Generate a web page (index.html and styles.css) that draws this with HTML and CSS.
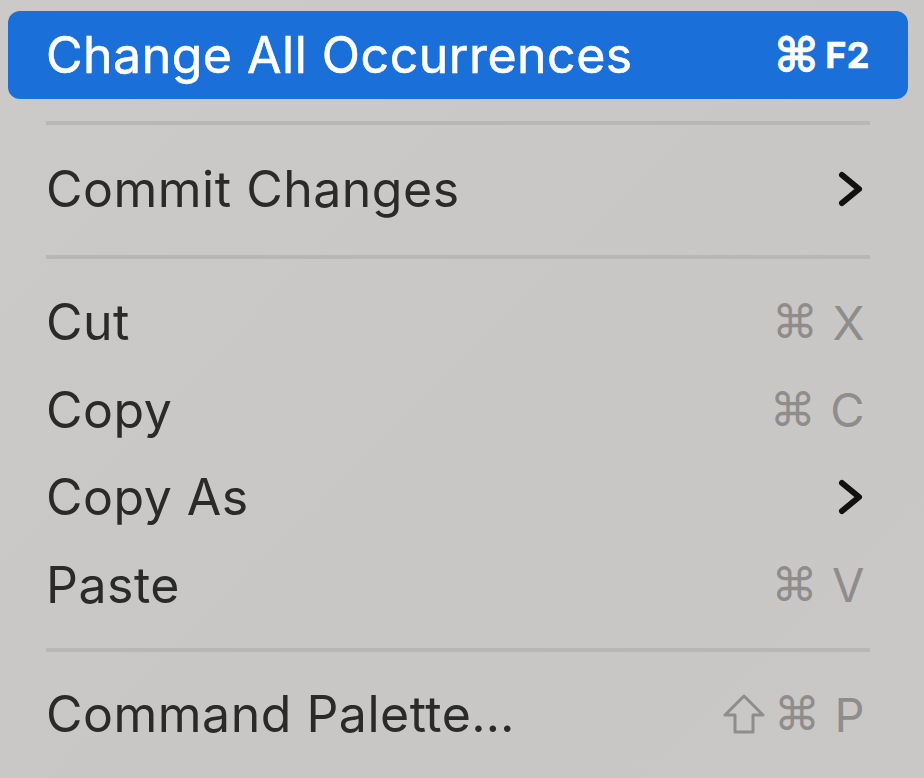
FILE: index.html
```html
<!DOCTYPE html>
<html>
<head>
<meta charset="utf-8">
<link rel="stylesheet" href="styles.css">
</head>
<body>
<div class="menu">
  <div class="item active">
    <span class="label">Change All Occurrences</span>
    <span class="keys"><span class="cmd">⌘</span><span class="fkey">F2</span></span>
  </div>
  <div class="sep"></div>
  <div class="item">
    <span class="label">Commit Changes</span>
    <svg class="chev" viewBox="0 0 26 36" width="26" height="36"><polyline points="4,4 21,18 4,32" fill="none" stroke="#111" stroke-width="6" stroke-linecap="round" stroke-linejoin="round"/></svg>
  </div>
  <div class="sep"></div>
  <div class="item">
    <span class="label">Cut</span>
    <span class="keys dim"><span class="cmd">⌘</span><span class="key">X</span></span>
  </div>
  <div class="item">
    <span class="label">Copy</span>
    <span class="keys dim"><span class="cmd">⌘</span><span class="key">C</span></span>
  </div>
  <div class="item">
    <span class="label">Copy As</span>
    <svg class="chev" viewBox="0 0 26 36" width="26" height="36"><polyline points="4,4 21,18 4,32" fill="none" stroke="#111" stroke-width="6" stroke-linecap="round" stroke-linejoin="round"/></svg>
  </div>
  <div class="item">
    <span class="label">Paste</span>
    <span class="keys dim"><span class="cmd">⌘</span><span class="key">V</span></span>
  </div>
  <div class="sep last"></div>
  <div class="item">
    <span class="label">Command Palette…</span>
    <span class="keys dim">
      <svg class="shift" viewBox="0 0 44 40" width="44" height="40"><path d="M22 2 L41 21 L31 21 L31 38 L13 38 L13 21 L3 21 Z" fill="none" stroke="#8e8d8c" stroke-width="3" stroke-linejoin="round"/></svg>
      <span class="cmd">⌘</span><span class="key">P</span>
    </span>
  </div>
</div>
</body>
</html>
```
FILE: styles.css
```css
html, body {
  margin: 0;
  padding: 0;
}
body {
  width: 924px;
  height: 778px;
  overflow: hidden;
  background: #c9c8c7;
  font-family: Inter, "Liberation Sans", sans-serif;
}
.menu {
  padding: 11px 16px 0 8px;
  background: linear-gradient(135deg, #cbcac9 0%, #c8c7c6 60%, #cac8c6 100%);
  height: 778px;
  box-sizing: border-box;
}
.item {
  height: 87.5px;
  display: flex;
  align-items: center;
  justify-content: space-between;
  padding: 0 43px 0 38px;
  color: #2a2a2a;
  font-size: 50px;
  letter-spacing: 0.5px;
  border-radius: 12px;
}
.item.active {
  height: 88px;
  background: #1a6fd9;
  color: #ffffff;
  padding-right: 38px;
  -webkit-text-stroke: 0.6px #ffffff;
}
.sep {
  height: 4px;
  background: #b8b7b6;
  margin: 22px 38px 20px 38px;
}
.sep.last {
  margin: 19px 38px 19px 38px;
}
.keys {
  display: flex;
  align-items: center;
  gap: 14px;
  font-size: 47px;
}
.keys.dim {
  color: #8e8d8c;
}
.cmd {
  font-family: "DejaVu Sans", sans-serif;
  font-size: 46px;
}
.shift {
  margin-right: -6px;
}
.active .keys {
  gap: 6px;
}
.active .cmd {
  font-weight: 700;
  font-size: 48px;
}
.fkey {
  font-size: 36px;
  font-weight: 700;
}
.chev {
  margin-right: 1px;
}
```
